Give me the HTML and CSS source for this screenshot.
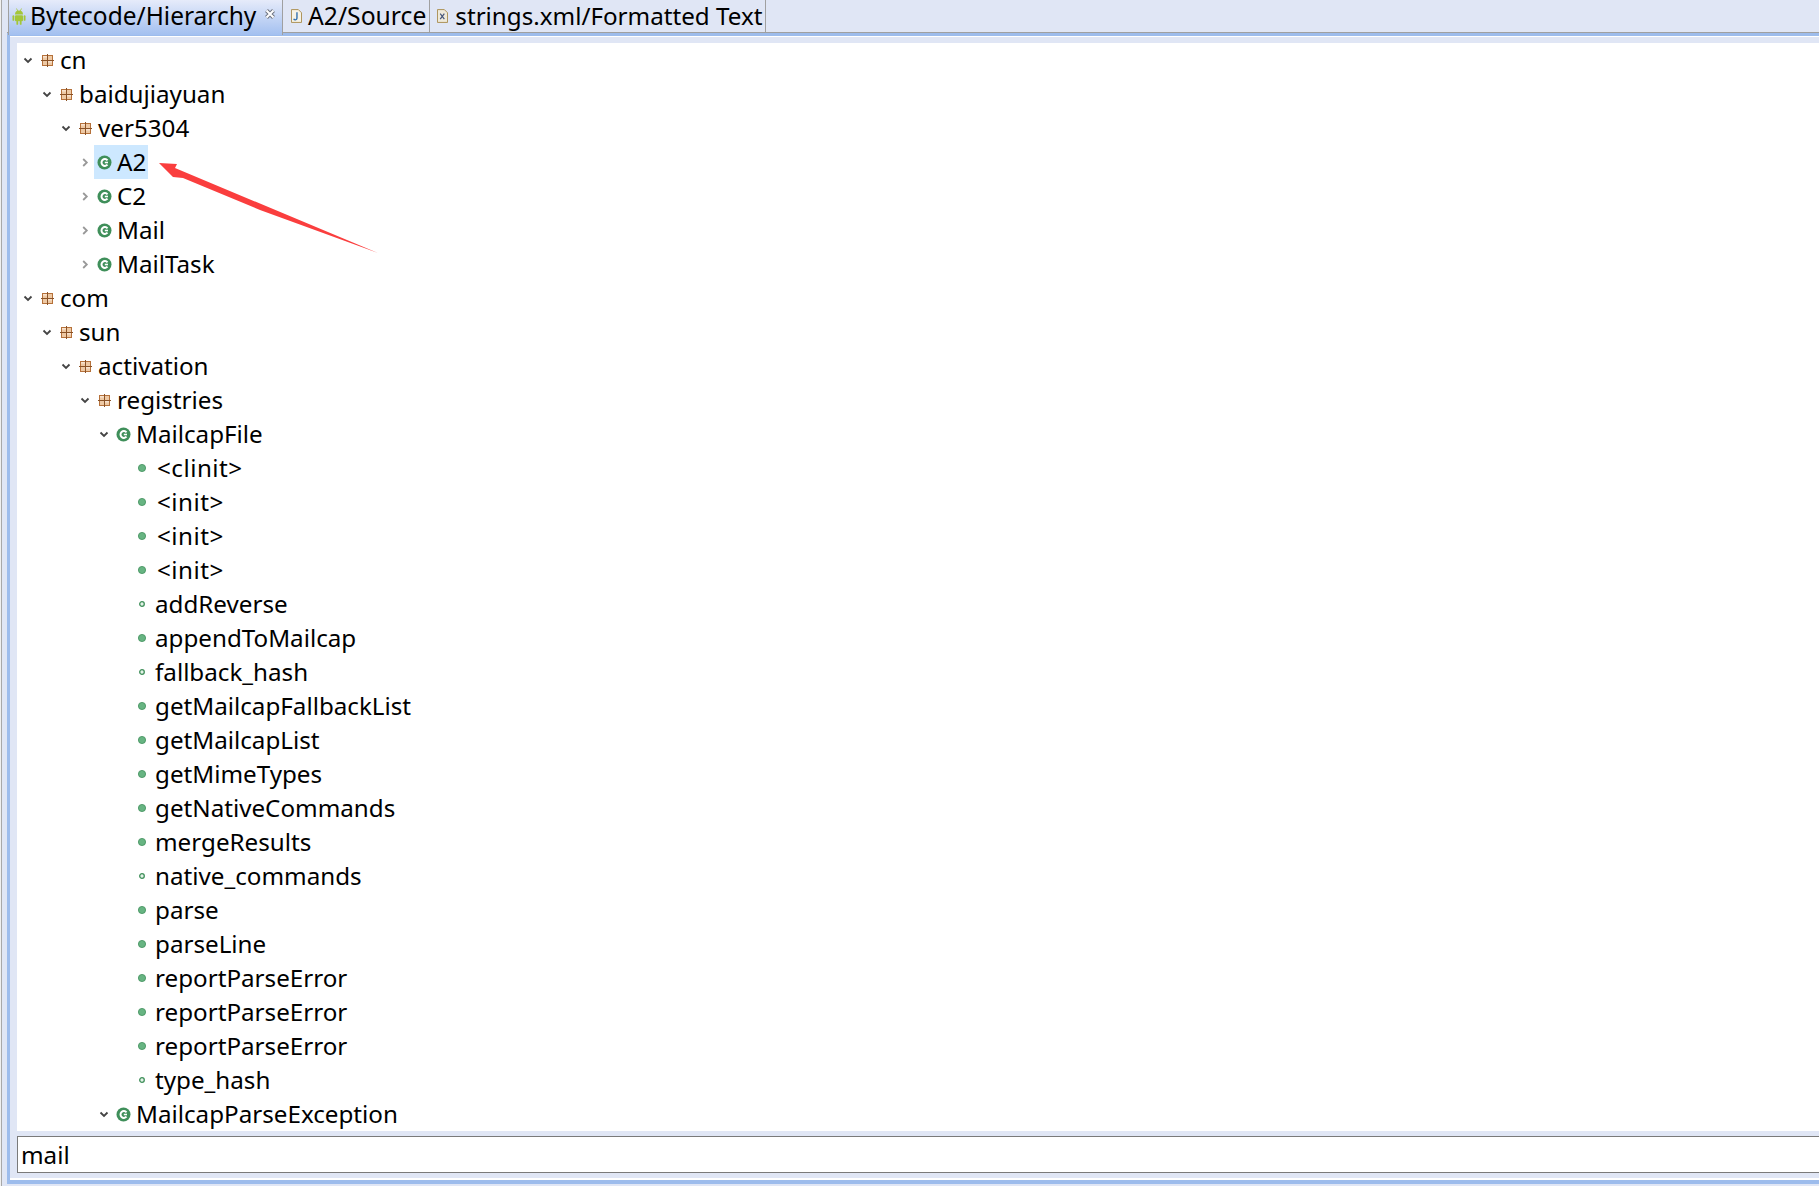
FILE: index.html
```html
<!DOCTYPE html>
<html lang="en">
<head>
<meta charset="utf-8">
<title>Bytecode/Hierarchy</title>
<link rel="stylesheet" href="styles.css">
</head>
<body>
<svg class="defs" width="0" height="0" aria-hidden="true">
  <defs>
    <symbol id="pkg" viewBox="0 0 15 15">
      <rect x="2.500" y="2.500" width="10" height="10" fill="#eec9a4" stroke="#b5713a"/>
      <path d="M7.500 1v13M1 7.500h13" stroke="#8a5226" stroke-width="1"/>
      <path d="M3 3h4v1.500H3zM8 8h4v1.500H8z" fill="#f8e3cf"/>
    </symbol>
    <symbol id="cls" viewBox="0 0 15 15">
      <circle cx="7.500" cy="7.500" r="7" fill="#3f8f5a"/>
      <path d="M10.500 5.300A3.400 3.400 0 1 0 10.500 9.700" fill="none" stroke="#fff" stroke-width="2"/>
      <path d="M7.800 7.500h3.200" stroke="#fff" stroke-width="1.600"/>
    </symbol>
    <symbol id="m" viewBox="0 0 12 12">
      <circle cx="6" cy="6" r="3.600" fill="#67b482" stroke="#3f8f5a" stroke-width=".8"/>
    </symbol>
    <symbol id="f" viewBox="0 0 12 12">
      <circle cx="6" cy="6" r="2.300" fill="#e4f3e8" stroke="#3f8f5a" stroke-width="1.300"/>
    </symbol>
    <symbol id="open" viewBox="0 0 12 12">
      <path d="M2.500 4.500 6 8l3.500-3.500" fill="none" stroke="#444" stroke-width="1.800"/>
    </symbol>
    <symbol id="closed" viewBox="0 0 12 12">
      <path d="M4.200 3 7.800 6.500l-3.600 3.500" fill="none" stroke="#999" stroke-width="1.800"/>
    </symbol>
  </defs>
</svg>
<div class="app">
  <div class="gutter"></div>
  <div class="main">
    <div class="tabs">
      <div class="tab active">
        <svg class="tab-ico" viewBox="0 0 14 17">
          <path d="M3 6.500a4 4 0 0 1 8 0z" fill="#a4c639"/>
          <path d="M4.500 .5l1.200 2.500M9.500 .5 8.300 3" stroke="#a4c639" stroke-width=".8"/>
          <rect x="3" y="7.300" width="8" height="6" rx="1" fill="#a4c639"/>
          <rect x="0.500" y="7.300" width="1.800" height="5.500" rx=".9" fill="#a4c639"/>
          <rect x="11.700" y="7.300" width="1.800" height="5.500" rx=".9" fill="#a4c639"/>
          <rect x="4.400" y="12.800" width="1.800" height="4" rx=".9" fill="#a4c639"/>
          <rect x="7.800" y="12.800" width="1.800" height="4" rx=".9" fill="#a4c639"/>
        </svg>
        <span class="tab-lbl first">Bytecode/Hierarchy</span>
        <svg class="close" viewBox="0 0 12 12">
          <path d="M2.500 2.500l7 7M9.500 2.500l-7 7" stroke="#6f7580" stroke-width="4"/>
          <path d="M2.500 2.500l7 7M9.500 2.500l-7 7" stroke="#fff" stroke-width="2"/>
        </svg>
      </div>
      <div class="tab src">
        <svg class="file-ico" viewBox="0 0 12 15">
          <path d="M.5.500h7.500l3.500 3.500v10.500H.5z" fill="#f7f3e6" stroke="#a68a4a"/>
          <path d="M6.500 3.500v6.500a1.800 1.800 0 0 1-3.500.5" fill="none" stroke="#2f6fb0" stroke-width="1.500"/>
        </svg>
        <span class="tab-lbl wide">A2/Source</span>
      </div>
      <div class="tab xml">
        <svg class="file-ico" viewBox="0 0 12 15">
          <path d="M.5.500h7.500l3.500 3.500v10.500H.5z" fill="#eeeadb" stroke="#a68a4a"/>
          <path d="M3.500 5l4.500 6M8 5l-4.500 6" fill="none" stroke="#44557a" stroke-width="1.300"/>
        </svg>
        <span class="tab-lbl">strings.xml/Formatted Text</span>
      </div>
    </div>
    <div class="frame">
      <div class="pane">
        <div class="tree">
          <div class="row l0"><svg class="tw"><use href="#open"/></svg><svg class="ico"><use href="#pkg"/></svg><span class="lbl">cn</span></div>
          <div class="row l1"><svg class="tw"><use href="#open"/></svg><svg class="ico"><use href="#pkg"/></svg><span class="lbl">baidujiayuan</span></div>
          <div class="row l2"><svg class="tw"><use href="#open"/></svg><svg class="ico"><use href="#pkg"/></svg><span class="lbl">ver5304</span></div>
          <div class="row l3"><svg class="tw"><use href="#closed"/></svg><span class="sel"><svg class="ico"><use href="#cls"/></svg><span class="lbl">A2</span></span></div>
          <div class="row l3"><svg class="tw"><use href="#closed"/></svg><svg class="ico"><use href="#cls"/></svg><span class="lbl">C2</span></div>
          <div class="row l3"><svg class="tw"><use href="#closed"/></svg><svg class="ico"><use href="#cls"/></svg><span class="lbl">Mail</span></div>
          <div class="row l3"><svg class="tw"><use href="#closed"/></svg><svg class="ico"><use href="#cls"/></svg><span class="lbl">MailTask</span></div>
          <div class="row l0"><svg class="tw"><use href="#open"/></svg><svg class="ico"><use href="#pkg"/></svg><span class="lbl">com</span></div>
          <div class="row l1"><svg class="tw"><use href="#open"/></svg><svg class="ico"><use href="#pkg"/></svg><span class="lbl">sun</span></div>
          <div class="row l2"><svg class="tw"><use href="#open"/></svg><svg class="ico"><use href="#pkg"/></svg><span class="lbl">activation</span></div>
          <div class="row l3"><svg class="tw"><use href="#open"/></svg><svg class="ico"><use href="#pkg"/></svg><span class="lbl">registries</span></div>
          <div class="row l4"><svg class="tw"><use href="#open"/></svg><svg class="ico"><use href="#cls"/></svg><span class="lbl">MailcapFile</span></div>
          <div class="row l5"><svg class="dot"><use href="#m"/></svg><span class="lbl ang">&lt;clinit&gt;</span></div>
          <div class="row l5"><svg class="dot"><use href="#m"/></svg><span class="lbl ang">&lt;init&gt;</span></div>
          <div class="row l5"><svg class="dot"><use href="#m"/></svg><span class="lbl ang">&lt;init&gt;</span></div>
          <div class="row l5"><svg class="dot"><use href="#m"/></svg><span class="lbl ang">&lt;init&gt;</span></div>
          <div class="row l5"><svg class="dot"><use href="#f"/></svg><span class="lbl">addReverse</span></div>
          <div class="row l5"><svg class="dot"><use href="#m"/></svg><span class="lbl">appendToMailcap</span></div>
          <div class="row l5"><svg class="dot"><use href="#f"/></svg><span class="lbl">fallback_hash</span></div>
          <div class="row l5"><svg class="dot"><use href="#m"/></svg><span class="lbl">getMailcapFallbackList</span></div>
          <div class="row l5"><svg class="dot"><use href="#m"/></svg><span class="lbl">getMailcapList</span></div>
          <div class="row l5"><svg class="dot"><use href="#m"/></svg><span class="lbl">getMimeTypes</span></div>
          <div class="row l5"><svg class="dot"><use href="#m"/></svg><span class="lbl">getNativeCommands</span></div>
          <div class="row l5"><svg class="dot"><use href="#m"/></svg><span class="lbl">mergeResults</span></div>
          <div class="row l5"><svg class="dot"><use href="#f"/></svg><span class="lbl">native_commands</span></div>
          <div class="row l5"><svg class="dot"><use href="#m"/></svg><span class="lbl">parse</span></div>
          <div class="row l5"><svg class="dot"><use href="#m"/></svg><span class="lbl">parseLine</span></div>
          <div class="row l5"><svg class="dot"><use href="#m"/></svg><span class="lbl">reportParseError</span></div>
          <div class="row l5"><svg class="dot"><use href="#m"/></svg><span class="lbl">reportParseError</span></div>
          <div class="row l5"><svg class="dot"><use href="#m"/></svg><span class="lbl">reportParseError</span></div>
          <div class="row l5"><svg class="dot"><use href="#f"/></svg><span class="lbl">type_hash</span></div>
          <div class="row l4"><svg class="tw"><use href="#open"/></svg><svg class="ico"><use href="#cls"/></svg><span class="lbl">MailcapParseException</span></div>
        </div>
        <div class="filter">mail</div>
      </div>
    </div>
  </div>
  <svg class="arrow" viewBox="0 0 240 110" width="240" height="110">
    <path d="M9 13 27 14 25 18 228 103 110 60 33 28 23 27z" fill="#fa3e3e"/>
  </svg>
</div>
</body>
</html>
```
FILE: styles.css
```css
* { box-sizing: border-box; }
html, body { margin: 0; height: 100%; }
body {
  background: #e0e6f5;
  font-family: "Noto Sans", "Open Sans", sans-serif;
  font-size: 24.2px;
  color: #000;
  overflow: hidden;
}
.defs { position: absolute; }
.app { position: relative; display: flex; width: 1819px; height: 1186px; }
.gutter {
  width: 7px;
  flex: none;
  background: #e0e6f5;
  border-left: 1px solid #f0f0f0;
  box-shadow: inset 1px 0 0 #a8a8a8;
}
.main { flex: 1; min-width: 0; display: flex; flex-direction: column; padding-bottom: 2px; }
.tabs {
  position: relative;
  display: flex;
  height: 33px;
  flex: none;
  background: #e0e6f5;
  border-bottom: 1px solid #a0a0a0;
  padding-left: 1px;
}
.tab {
  display: flex;
  align-items: center;
  flex: none;
  height: 32px;
  padding: 0 3px 0 6px;
  border-right: 1px solid #a0a0a0;
  white-space: nowrap;
}
.tab.src { padding: 0 3px 0 8px; }
.tab.xml { padding: 0 3px 0 7px; }
.tab.xml .file-ico { margin-right: 7px; }
.tab.active {
  position: relative;
  z-index: 1;
  width: 275px;
  height: 35px;
  background: linear-gradient(#e6ebfa, #a3c0f0);
  padding: 0 6px 3px 3px;
  border-left: 1px solid #a0a0a0;
}
.tab-lbl { line-height: 30px; }
.tab-lbl.first { font-size: 24.5px; }
.tab-lbl.wide { font-size: 24.7px; }
.tab-ico { width: 14px; height: 17px; flex: none; margin-right: 4px; }
.close { width: 12px; height: 12px; flex: none; margin: 0 0 5px auto; }
.file-ico { width: 11px; height: 14px; flex: none; margin-right: 6px; }
.frame {
  flex: 1;
  min-height: 0;
  display: flex;
  border-style: solid;
  border-color: #9dbcec;
  border-width: 3px 0 4px 3px;
}
.pane {
  flex: 1;
  min-width: 0;
  display: flex;
  flex-direction: column;
  border-style: solid;
  border-color: #fff;
  border-width: 1px 0 2px 0;
  background: #e0e6f5;
  padding: 6px 0 5px 7px;
}
.tree { flex: none; height: 1088px; background: #fff; overflow: hidden; }
.row { display: flex; align-items: center; height: 34px; white-space: nowrap; }
.lbl { padding-bottom: 2px; }
.lbl.ang { padding-left: 2px; letter-spacing: .5px; }
.l0 { padding-left: 5px; }
.l1 { padding-left: 24px; }
.l2 { padding-left: 43px; }
.l3 { padding-left: 62px; }
.l4 { padding-left: 81px; }
.l5 { padding-left: 119px; }
.tw { width: 12px; height: 12px; flex: none; margin-right: 6px; }
.ico { width: 15px; height: 15px; flex: none; margin-right: 5px; }
.dot { width: 12px; height: 12px; flex: none; margin-right: 7px; }
.sel {
  display: flex;
  align-items: center;
  height: 34px;
  margin-left: -3px;
  padding: 0 2px 0 3px;
  background: #cde8ff;
}
.filter {
  flex: none;
  height: 37px;
  margin-top: 5px;
  line-height: 35px;
  background: #fff;
  border: solid #7a7a7a;
  border-width: 1px 0 1px 1px;
  padding-left: 3px;
}
.arrow { position: absolute; left: 150px; top: 150px; }
```
